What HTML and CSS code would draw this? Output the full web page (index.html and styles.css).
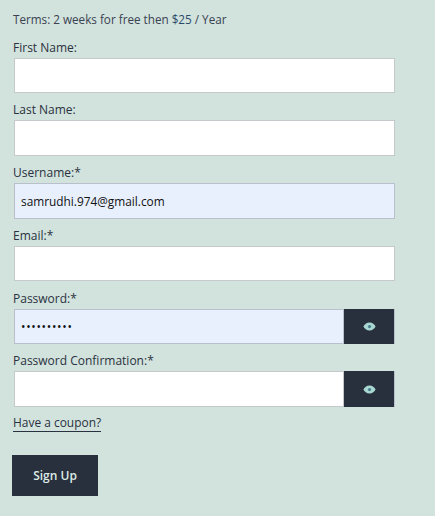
FILE: index.html
```html
<!DOCTYPE html>
<html lang="en">
<head>
<meta charset="utf-8">
<title>Sign Up</title>
<link rel="stylesheet" href="styles.css">
</head>
<body>
<form class="form">
  <p class="terms">Terms: 2 weeks for free then <span class="price">$25</span> / Year</p>
  <div class="field"><label class="label">First Name:</label><input class="input" type="text"></div>
  <div class="field"><label class="label">Last Name:</label><input class="input" type="text"></div>
  <div class="field"><label class="label">Username:*</label><input class="input filled" type="text" value="samrudhi.974@gmail.com"></div>
  <div class="field"><label class="label">Email:*</label><input class="input" type="text"></div>
  <div class="field"><label class="label">Password:*</label>
    <div class="group"><input class="input filled secret" type="password" value="samrudhi97"><button class="eye" type="button"><svg viewBox="0 0 16 16" width="13" height="13"><path class="eye-shape" d="M8 3C4.500 3 1.700 5.400.5 8c1.200 2.600 4 5 7.500 5s6.300-2.400 7.500-5C14.300 5.400 11.500 3 8 3z"/><circle class="eye-pupil" cx="8" cy="8" r="2"/></svg></button></div>
  </div>
  <div class="field"><label class="label">Password Confirmation:*</label>
    <div class="group"><input class="input secret" type="password"><button class="eye" type="button"><svg viewBox="0 0 16 16" width="13" height="13"><path class="eye-shape" d="M8 3C4.500 3 1.700 5.400.5 8c1.200 2.600 4 5 7.500 5s6.300-2.400 7.500-5C14.300 5.400 11.500 3 8 3z"/><circle class="eye-pupil" cx="8" cy="8" r="2"/></svg></button></div>
  </div>
  <a class="coupon" href="#">Have a coupon?</a>
  <button class="submit" type="button">Sign Up</button>
</form>
</body>
</html>
```
FILE: styles.css
```css
* { box-sizing: border-box; }
html, body { margin: 0; height: 100%; }
body {
  background: #d2e3dd;
  color: #2a3140;
  font-family: "Open Sans", "Noto Sans", sans-serif;
  font-size: 12px;
  overflow: hidden;
}
.form {
  display: flex;
  flex-direction: column;
  align-items: flex-start;
  padding: 11px 0 0 12px;
}
.terms { margin: 0 0 10.6px 1px; line-height: 17px; font-size: 11.7px; color: #3a4150; }
.price { color: #2a4a6a; }
.field { width: 383px; margin-bottom: 8.15px; }
.label { display: block; margin-left: 1px; line-height: 17px; height: 19px; font-size: 12px; }
.input {
  display: block;
  width: 381px;
  height: 35.6px;
  margin-left: 2px;
  padding: 0 6px;
  border: 1px solid #c6c9cc;
  border-radius: 0;
  background: #fff;
  font-family: inherit;
  font-size: 11.85px;
  color: #111;
  outline: none;
}
.filled { background: #e8f0fe; border-color: #b9bfcc; }
.secret { letter-spacing: 0.7px; }
.group { display: flex; width: 381px; margin-left: 2px; border-right: 1px solid #b9bfcc; }
.group .input { flex: 1; width: auto; margin: 0; }
.eye {
  width: 50px;
  height: 35.6px;
  padding: 0;
  border: 0;
  background: #282f3d;
  display: flex;
  align-items: center;
  justify-content: center;
}
.eye-shape { fill: #a9d8d2; }
.eye-pupil { fill: #4a7f8e; }
.coupon {
  margin: 0 0 0 1px;
  color: #2a3140;
  font-size: 11.95px;
  text-decoration: none;
  border-bottom: 1px solid #2a3140;
  line-height: 16px;
}
.submit {
  margin-top: 22.7px;
  width: 86px;
  height: 41px;
  border: 0;
  background: #282f3d;
  color: #dcebe6;
  font-family: inherit;
  font-size: 12px;
  font-weight: 600;
}
```
